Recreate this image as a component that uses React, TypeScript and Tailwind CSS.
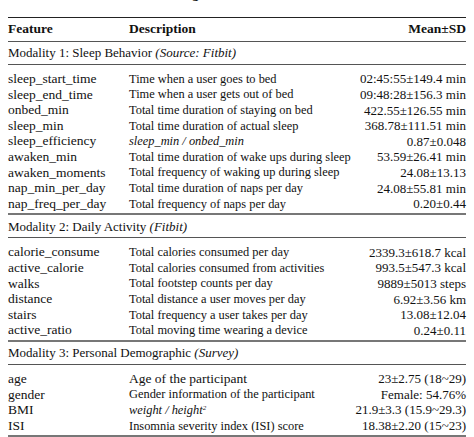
import React from "react";

type Row = { f: string; d: React.ReactNode; v: string };

const sleep: Row[] = [
  { f: "sleep_start_time", d: "Time when a user goes to bed", v: "02:45:55±149.4 min" },
  { f: "sleep_end_time", d: "Time when a user gets out of bed", v: "09:48:28±156.3 min" },
  { f: "onbed_min", d: "Total time duration of staying on bed", v: "422.55±126.55 min" },
  { f: "sleep_min", d: "Total time duration of actual sleep", v: "368.78±111.51 min" },
  { f: "sleep_efficiency", d: <i>sleep_min / onbed_min</i>, v: "0.87±0.048" },
  { f: "awaken_min", d: "Total time duration of wake ups during sleep", v: "53.59±26.41 min" },
  { f: "awaken_moments", d: "Total frequency of waking up during sleep", v: "24.08±13.13" },
  { f: "nap_min_per_day", d: "Total time duration of naps per day", v: "24.08±55.81 min" },
  { f: "nap_freq_per_day", d: "Total frequency of naps per day", v: "0.20±0.44" },
];

const activity: Row[] = [
  { f: "calorie_consume", d: "Total calories consumed per day", v: "2339.3±618.7 kcal" },
  { f: "active_calorie", d: "Total calories consumed from activities", v: "993.5±547.3 kcal" },
  { f: "walks", d: "Total footstep counts per day", v: "9889±5013 steps" },
  { f: "distance", d: "Total distance a user moves per day", v: "6.92±3.56 km" },
  { f: "stairs", d: "Total frequency a user takes per day", v: "13.08±12.04" },
  { f: "active_ratio", d: "Total moving time wearing a device", v: "0.24±0.11" },
];

const demo: Row[] = [
  { f: "age", d: <span className="text-[13.5px]">Age of the participant</span>, v: "23±2.75 (18~29)" },
  { f: "gender", d: "Gender information of the participant", v: "Female: 54.76%" },
  {
    f: "BMI",
    d: (
      <i>
        weight / height<sup className="text-[7px]">2</sup>
      </i>
    ),
    v: "21.9±3.3 (15.9~29.3)",
  },
  { f: "ISI", d: "Insomnia severity index (ISI) score", v: "18.38±2.20 (15~23)" },
];

function Rows({ rows }: { rows: Row[] }) {
  return (
    <div className="py-[4px]">
      {rows.map((r) => (
        <div key={r.f} className="grid grid-cols-[121px_1fr_auto] items-center h-[15.6px]">
          <span className="text-[13.5px]">{r.f}</span>
          <span className="text-[12.4px]">{r.d}</span>
          <span className="text-[13px]">{r.v}</span>
        </div>
      ))}
    </div>
  );
}

function Group({ children }: { children: React.ReactNode }) {
  return (
    <div className="h-[23px] flex items-center text-[13px] border-b border-[#555]">{children}</div>
  );
}

export default function App() {
  return (
    <div
      className="w-[474px] h-[437px] overflow-hidden bg-white text-[#111]"
      style={{ fontFamily: '"Liberation Serif", serif' }}
    >
      {/* caption, only the descender shows */}
      <div className="h-[17px] overflow-hidden">
        <div className="w-[199px] text-right font-bold text-[14px] leading-[17px] -mt-[15px]">
          Features Setting
        </div>
      </div>

      <div className="px-[8px]">
        <div className="border-t border-[#222]" />
        <div className="grid grid-cols-[121px_1fr_auto] items-center h-[24px] font-bold text-[13.5px] border-b border-[#555]">
          <span>Feature</span>
          <span>Description</span>
          <span>Mean±SD</span>
        </div>

        <Group>
          Modality 1: Sleep Behavior&nbsp;<i>(Source: Fitbit)</i>
        </Group>
        <div className="border-b-2 border-[#777]">
          <Rows rows={sleep} />
        </div>

        <Group>
          Modality 2: Daily Activity&nbsp;<i>(Fitbit)</i>
        </Group>
        <div className="border-b-2 border-[#777]">
          <Rows rows={activity} />
        </div>

        <Group>
          Modality 3: Personal Demographic&nbsp;<i>(Survey)</i>
        </Group>
        <div className="border-b-2 border-[#777]">
          <Rows rows={demo} />
        </div>
      </div>
    </div>
  );
}
